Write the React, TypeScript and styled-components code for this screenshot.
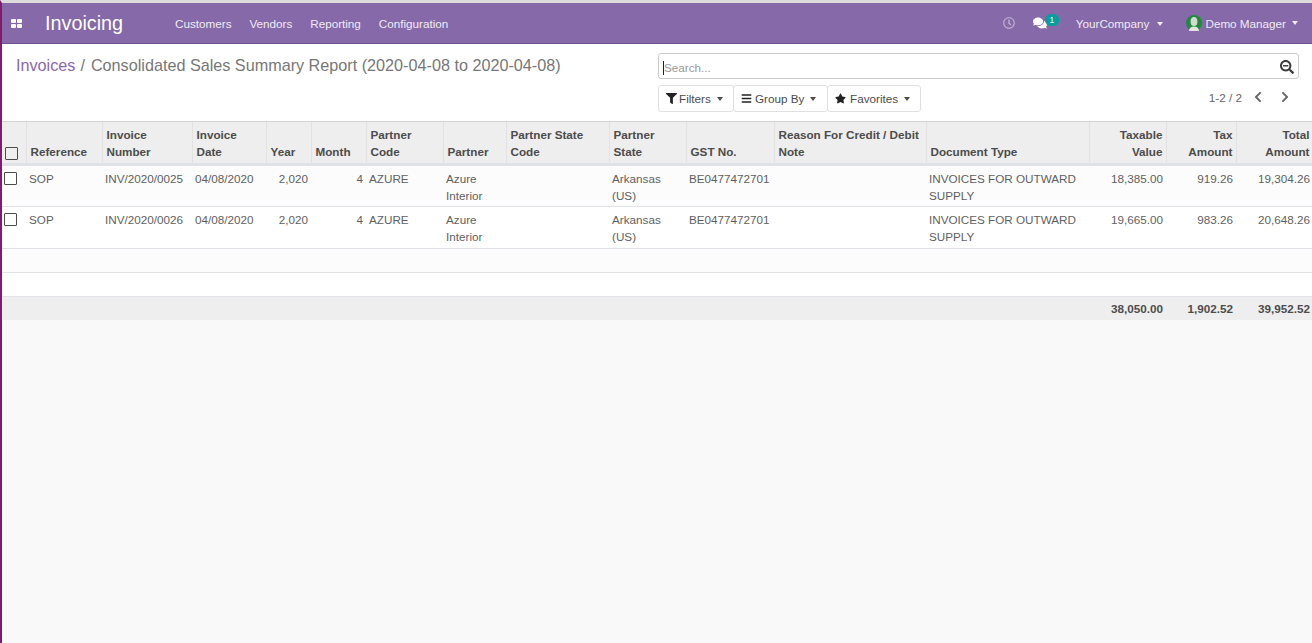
import React from 'react';
import styled, { createGlobalStyle } from 'styled-components';
import {
  FaChevronLeft,
  FaChevronRight,
  FaComments,
  FaFilter,
  FaBars,
  FaRegClock,
  FaSearchMinus,
  FaStar,
} from 'react-icons/fa';

const GlobalStyle = createGlobalStyle`
  html, body {
    margin: 0;
    padding: 0;
    height: 100%;
    background: #f9f9f9;
    font-family: "Liberation Sans", Arial, sans-serif;
    font-size: 11.7px;
    color: #4c4c4c;
  }
  #root { height: 100%; }
  * { box-sizing: border-box; }
`;

const Page = styled.div`
  height: 643px;
  overflow: hidden;
  border-top: 3px solid #dcdcdc;
  border-left: 2px solid #7c1f6a;
  display: flex;
  flex-direction: column;
`;

const NavBar = styled.header`
  height: 41px;
  background: #8569a9;
  border-bottom: 1px solid #6d5190;
  display: flex;
  align-items: center;
  color: #fff;
  flex: none;
`;

const AppsGrid = styled.span`
  display: grid;
  grid-template-columns: 5px 5px;
  grid-auto-rows: 4px;
  gap: 1px;
  margin-left: 9px;
`;

const AppsCell = styled.i`
  background: #fff;
  border-radius: 1px;
`;

const Brand = styled.span`
  font-size: 19.8px;
  margin-left: 23px;
  width: 130px;
`;

const Menu = styled.nav`
  display: flex;
  gap: 17.9px;
  font-size: 11.7px;
  color: #f0ebf3;
`;

const NavRight = styled.div`
  margin-left: auto;
  display: flex;
  align-items: center;
  font-size: 11.7px;
  color: #f0ebf3;
  padding-right: 14px;
`;

const ClockIcon = styled(FaRegClock)`
  width: 12px;
  height: 12px;
  color: #c4b5d4;
`;

const Chat = styled.span`
  position: relative;
  display: flex;
  margin-left: 18px;
  margin-right: 29px;
`;

const ChatBadge = styled.span`
  position: absolute;
  top: -2px;
  left: 12px;
  width: 14px;
  height: 12px;
  border-radius: 7px;
  background: #00a09d;
  color: #fff;
  font-size: 8.5px;
  line-height: 12px;
  text-align: center;
`;

const Caret = styled.i<{ $left?: number }>`
  display: inline-block;
  width: 0;
  height: 0;
  margin-left: ${(p) => p.$left ?? 8}px;
  vertical-align: 2px;
  border-top: 4px solid currentColor;
  border-left: 3.75px solid transparent;
  border-right: 3.75px solid transparent;
`;

const Company = styled.span`
  margin-right: 23px;
`;

const User = styled.span`
  display: flex;
  align-items: center;
`;

const Avatar = styled.svg`
  width: 16px;
  height: 16px;
  margin-right: 3px;
`;

const ControlPanel = styled.section`
  height: 78px;
  background: #fff;
  border-bottom: 1px solid #d4d4d4;
  display: grid;
  grid-template-columns: 656px 1fr;
  flex: none;
`;

const Breadcrumb = styled.div`
  font-size: 16.2px;
  padding: 12px 0 0 14px;
  color: #777;
`;

const Crumb = styled.span`
  color: #8a68ad;
`;

const Slash = styled.span`
  margin: 0 6px 0 5px;
`;

const PanelRight = styled.div`
  padding: 9px 13px 0 0;
  display: flex;
  flex-direction: column;
  gap: 6px;
`;

const SearchBox = styled.div`
  height: 26px;
  border: 1px solid #ccc;
  border-radius: 3px;
  display: flex;
  align-items: center;
  justify-content: space-between;
  padding: 2px 4px 0;
  color: #999;
`;

const Placeholder = styled.span`
  border-left: 1px solid #222;
  line-height: 14px;
  font-size: 11.7px;
  margin-top: 1px;
`;

const SearchIcon = styled(FaSearchMinus)`
  width: 14px;
  height: 14px;
  color: #3b3b3b;
`;

const PanelRow = styled.div`
  display: flex;
  justify-content: space-between;
`;

const ButtonGroup = styled.div`
  display: flex;
`;

const FilterButton = styled.button<{ $width: number; $gap: number }>`
  width: ${(p) => p.$width}px;
  height: 27px;
  background: #fff;
  border: 1px solid #e0e0e0;
  border-radius: 3px;
  margin-left: -1px;
  padding: 0 0 0 7px;
  display: flex;
  align-items: center;
  font-family: inherit;
  font-size: 11.7px;
  color: #4c4c4c;
  &:first-child {
    margin-left: 0;
  }
  svg {
    width: 11px;
    height: 11px;
    color: #222;
    margin-right: ${(p) => p.$gap}px;
  }
`;

const Pager = styled.div`
  display: flex;
  align-items: center;
  padding: 0 8px 0 0;
  height: 24px;
  color: #666;
`;

const PagerIcon = styled.span<{ $left: number }>`
  display: flex;
  margin-left: ${(p) => p.$left}px;
  color: #666;
  svg {
    width: 12px;
    height: 12px;
  }
`;

const Table = styled.table`
  table-layout: fixed;
  width: 1310px;
  border-collapse: collapse;
  flex: none;
`;

const Head = styled.th<{ $right?: boolean }>`
  background: #eee;
  border-right: 1px solid #e2e2e2;
  border-bottom: 3px solid #dfe2e6;
  padding: 4px 3px 3px 4px;
  font-weight: 700;
  font-size: 11.7px;
  line-height: 17px;
  vertical-align: bottom;
  color: #4c4c4c;
  text-align: ${(p) => (p.$right ? 'right' : 'left')};
  height: 42px;
  &:last-child {
    padding-right: 2px;
  }
`;

const Row = styled.tr<{ $odd?: boolean; $empty?: boolean }>`
  background: ${(p) => (p.$odd ? '#fcfcfc' : '#fff')};
  height: ${(p) => (p.$empty ? 24 : 42)}px;
  border-bottom: 1px solid #dfe2e6;
`;

const Cell = styled.td<{ $right?: boolean }>`
  padding: 4px 3px 0;
  font-size: 11.7px;
  line-height: 17px;
  vertical-align: top;
  color: #5f5f5f;
  text-align: ${(p) => (p.$right ? 'right' : 'left')};
  &:last-child {
    padding-right: 2px;
  }
`;

const FootRow = styled.tr`
  background: #eee;
  height: 23px;
`;

const FootCell = styled.td`
  padding: 1px 3px 0;
  font-weight: 700;
  text-align: right;
  font-size: 11.7px;
  color: #4c4c4c;
  &:last-child {
    padding-right: 2px;
  }
`;

const Check = styled.span`
  display: block;
  width: 13px;
  height: 13px;
  border: 1px solid #4c4c4c;
  border-radius: 1px;
  background: #fff;
`;

const HeadCheck = styled(Check)`
  background: transparent;
  margin: 0 0 0 -1px;
`;

const RowCheck = styled(Check)`
  margin: 2px 0 0 -1px;
`;

const widths = [24, 76, 90, 74, 45, 55, 77, 63, 103, 77, 88, 152, 163, 77, 70, 76];

const columns: { label: string; right?: boolean }[] = [
  { label: 'Reference' },
  { label: 'Invoice Number' },
  { label: 'Invoice Date' },
  { label: 'Year' },
  { label: 'Month' },
  { label: 'Partner Code' },
  { label: 'Partner' },
  { label: 'Partner State Code' },
  { label: 'Partner State' },
  { label: 'GST No.' },
  { label: 'Reason For Credit / Debit Note' },
  { label: 'Document Type' },
  { label: 'Taxable Value', right: true },
  { label: 'Tax Amount', right: true },
  { label: 'Total Amount', right: true },
];

const invoices = [
  { number: 'INV/2020/0025', taxable: '18,385.00', tax: '919.26', total: '19,304.26' },
  { number: 'INV/2020/0026', taxable: '19,665.00', tax: '983.26', total: '20,648.26' },
];

const App: React.FC = () => (
  <>
    <GlobalStyle />
    <Page>
      <NavBar>
        <AppsGrid>
          <AppsCell />
          <AppsCell />
          <AppsCell />
          <AppsCell />
        </AppsGrid>
        <Brand>Invoicing</Brand>
        <Menu>
          <span>Customers</span>
          <span>Vendors</span>
          <span>Reporting</span>
          <span>Configuration</span>
        </Menu>
        <NavRight>
          <ClockIcon />
          <Chat>
            <FaComments size={14} color="#fff" />
            <ChatBadge>1</ChatBadge>
          </Chat>
          <Company>
            YourCompany
            <Caret />
          </Company>
          <User>
            <Avatar viewBox="0 0 16 16">
              <circle cx="8" cy="8" r="8" fill="#1f8a3c" />
              <ellipse cx="8" cy="6.5" rx="3.4" ry="4.6" fill="#d8d8d0" />
              <path d="M3 16c0-3 2-4.5 5-4.5s5 1.5 5 4.5z" fill="#e4e4dc" />
            </Avatar>
            Demo Manager
            <Caret $left={6} />
          </User>
        </NavRight>
      </NavBar>

      <ControlPanel>
        <Breadcrumb>
          <Crumb>Invoices</Crumb>
          <Slash>/</Slash>
          Consolidated Sales Summary Report (2020-04-08 to 2020-04-08)
        </Breadcrumb>
        <PanelRight>
          <SearchBox>
            <Placeholder>Search...</Placeholder>
            <SearchIcon />
          </SearchBox>
          <PanelRow>
            <ButtonGroup>
              <FilterButton $width={76} $gap={2}>
                <FaFilter />
                Filters
                <Caret $left={6} />
              </FilterButton>
              <FilterButton $width={95} $gap={3}>
                <FaBars />
                Group By
                <Caret $left={6} />
              </FilterButton>
              <FilterButton $width={94} $gap={4}>
                <FaStar />
                Favorites
                <Caret $left={6} />
              </FilterButton>
            </ButtonGroup>
            <Pager>
              1-2 / 2
              <PagerIcon $left={10}>
                <FaChevronLeft />
              </PagerIcon>
              <PagerIcon $left={15}>
                <FaChevronRight />
              </PagerIcon>
            </Pager>
          </PanelRow>
        </PanelRight>
      </ControlPanel>

      <Table>
        <colgroup>
          {widths.map((w, i) => (
            <col key={i} style={{ width: w }} />
          ))}
        </colgroup>
        <thead>
          <tr>
            <Head>
              <HeadCheck />
            </Head>
            {columns.map((c) => (
              <Head key={c.label} $right={c.right}>
                {c.label}
              </Head>
            ))}
          </tr>
        </thead>
        <tbody>
          {invoices.map((inv, i) => (
            <Row key={inv.number} $odd={i === 0}>
              <Cell>
                <RowCheck />
              </Cell>
              <Cell>SOP</Cell>
              <Cell>{inv.number}</Cell>
              <Cell>04/08/2020</Cell>
              <Cell $right>2,020</Cell>
              <Cell $right>4</Cell>
              <Cell>AZURE</Cell>
              <Cell>Azure Interior</Cell>
              <Cell />
              <Cell>Arkansas (US)</Cell>
              <Cell>BE0477472701</Cell>
              <Cell />
              <Cell>INVOICES FOR OUTWARD SUPPLY</Cell>
              <Cell $right>{inv.taxable}</Cell>
              <Cell $right>{inv.tax}</Cell>
              <Cell $right>{inv.total}</Cell>
            </Row>
          ))}
          <Row $odd $empty>
            <Cell colSpan={16} />
          </Row>
          <Row $empty>
            <Cell colSpan={16} />
          </Row>
        </tbody>
        <tfoot>
          <FootRow>
            <FootCell colSpan={14}>38,050.00</FootCell>
            <FootCell>1,902.52</FootCell>
            <FootCell>39,952.52</FootCell>
          </FootRow>
        </tfoot>
      </Table>
    </Page>
  </>
);

export default App;
